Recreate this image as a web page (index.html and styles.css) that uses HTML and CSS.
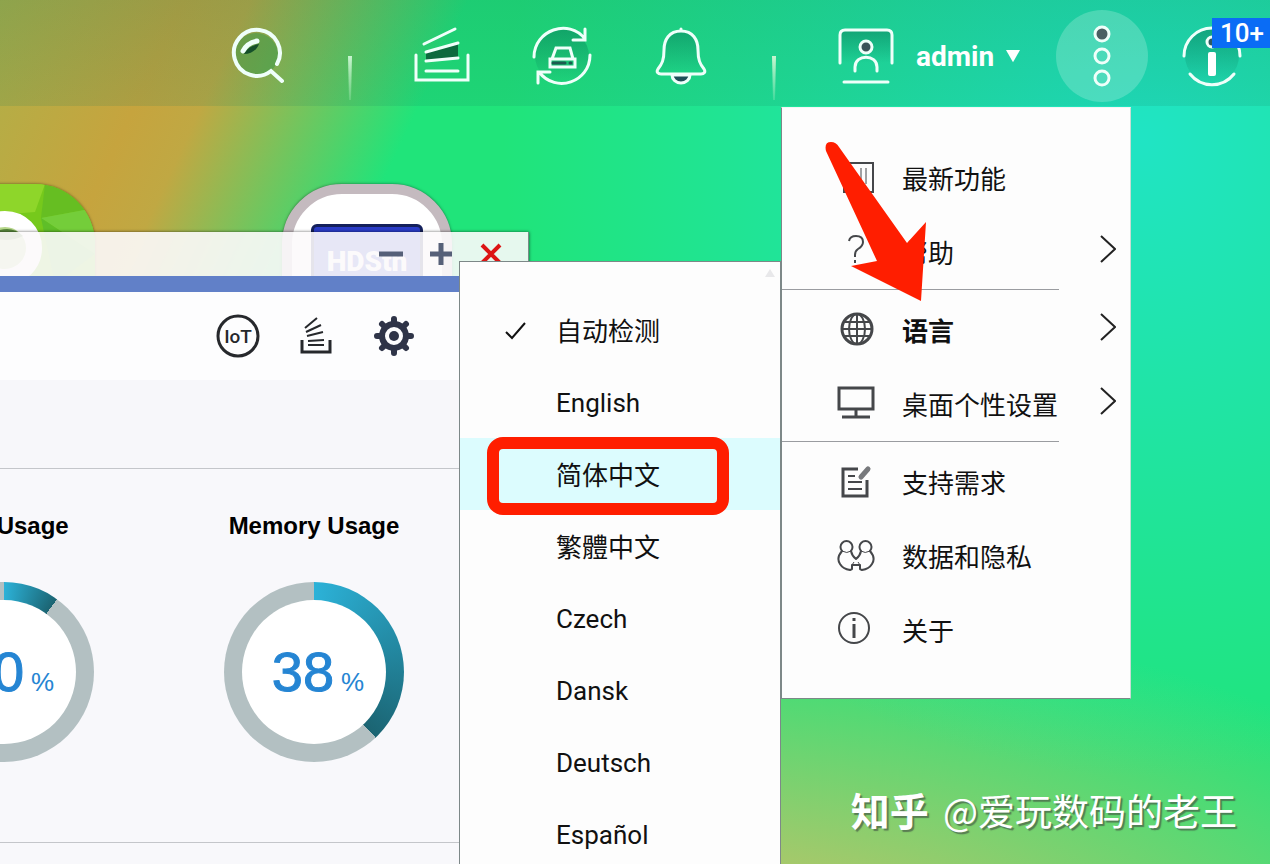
FILE: index.html
```html
<!DOCTYPE html>
<html lang="zh-CN">
<head>
    <meta charset="UTF-8">
    <meta name="viewport" content="width=device-width, initial-scale=1.0">
    <title>QTS</title>
    <link rel="stylesheet" href="styles.css">
</head>
<body>
    <div class="desktop">
        <header class="topbar">
            <button class="tool" aria-label="搜索">
                <svg class="tool-icon" viewBox="0 0 60 60">
                    <defs>
                        <linearGradient id="shade" x1="0" y1="0" x2="0" y2="1">
                            <stop offset="0" stop-color="#067a58" stop-opacity=".5"/>
                            <stop offset="1" stop-color="#067a58" stop-opacity="0"/>
                        </linearGradient>
                    </defs>
                    <circle cx="28" cy="29" r="22" fill="#2f9a4a" stroke="none" opacity=".45"/>
                    <path d="M16 28c7 0 13-4 15-10-7 1-13 5-15 10z" fill="#15502a" stroke="none"/>
                    <path d="M49 38A23 23 0 1 0 43 45L54 55" stroke-width="4"/>
                    <path d="M15 25Q19 17 29 15" stroke-width="5"/>
                </svg>
            </button>
            <span class="divider"></span>
            <button class="tool" aria-label="后台任务">
                <svg class="tool-icon" viewBox="0 0 60 60">
                    <path d="M14 26L46 16V32L14 35z" fill="#0c6a3e" stroke="none"/>
                    <path d="M4 29V54H56V29M14 45H46M14 35L46 32M14 26L46 17M12 18L43 3"/>
                </svg>
            </button>
            <button class="tool" aria-label="外接设备">
                <svg class="tool-icon" viewBox="0 0 60 60">
                    <circle cx="30" cy="30" r="27" fill="url(#shade)" stroke="none"/>
                    <path d="M2 31C2 4 37-8 53 13M53 3V14H41M58 29C58 56 24 68 7 46M6 57V46H18"/>
                    <path d="M20 33L24 22H38L41 33M18 33H43V41H18z"/>
                    <path d="M21 37H33M38 37H39" stroke="#1c5c50"/>
                </svg>
            </button>
            <button class="tool" aria-label="通知">
                <svg class="tool-icon" viewBox="0 0 60 60">
                    <path d="M20 49a9 8 0 0 0 18 0z" fill="#1f4f58"/>
                    <path d="M29 5C17 5 12 14 12 24C12 34 10 38 6 43C4 46 6 48 9 48H49C52 48 54 46 52 43C48 38 46 34 46 24C46 14 41 5 29 5zM29 3V5" fill="url(#shade)"/>
                </svg>
            </button>
            <span class="divider"></span>
            <button class="user">
                <svg class="user-icon" viewBox="0 0 56 60">
                    <path d="M2 37V9Q2 4 7 4H49Q54 4 54 9V37" fill="url(#shade)"/>
                    <path d="M6 56H50M17 45V41C17 28 39 28 39 41V45"/>
                    <circle cx="28" cy="21" r="6" fill="#3a5358"/>
                </svg>
                <span>admin</span>
                <svg class="caret" viewBox="0 0 16 14"><path d="M0 0H16L8 14z"/></svg>
            </button>
            <button class="tool" aria-label="更多">
                <svg class="more-icon" viewBox="0 0 92 92">
                    <circle cx="46" cy="46" r="46" fill="#fff" fill-opacity=".2" stroke="none"/>
                    <circle cx="46" cy="24" r="7" fill="#4a5f62"/>
                    <circle cx="46" cy="46" r="7"/>
                    <circle cx="46" cy="68" r="7"/>
                </svg>
            </button>
            <button class="tool info" aria-label="信息">
                <svg class="tool-icon" viewBox="0 0 60 60">
                    <circle cx="30" cy="30" r="27" fill="url(#shade)" stroke="none"/>
                    <path d="M2 30A28 28 0 0 1 58 30M8 48A28 28 0 0 0 52 48"/>
                    <circle cx="30" cy="16" r="5" fill="#2c5a60"/>
                    <rect x="26" y="26" width="8" height="24" rx="2" fill="#fff" stroke="none"/>
                </svg>
            </button>
            <span class="badge">10+</span>
        </header>

        <div class="app app-search">
            <svg viewBox="0 0 170 170">
                <path d="M0 0H170V170H0z" fill="#76c91c"/>
                <path d="M0 0H120L110 28L84 30z" fill="#8ed62a"/>
                <path d="M120 0H170V24L116 34z" fill="#66be22"/>
                <path d="M116 34L170 24V70z" fill="#74cd3a"/>
                <path d="M116 34L170 70L130 100z" fill="#5fbe28"/>
                <circle cx="80" cy="64" r="29" fill="#b6d78a" stroke="#fff" stroke-width="16"/>
                <path d="M62 52Q84 38 98 52Q82 60 62 52z" fill="#55853a"/>
            </svg>
        </div>
        <div class="app app-hd">
            <div class="hd-screen">HDStn</div>
        </div>

        <section class="window">
            <div class="titlebar">
                <button class="win-btn" aria-label="最小化"><svg viewBox="0 0 24 24"><path d="M0 12H24"/></svg></button>
                <button class="win-btn" aria-label="最大化"><svg viewBox="0 0 24 24"><path d="M1 12H23M12 1V23"/></svg></button>
                <button class="win-btn close" aria-label="关闭"><svg viewBox="0 0 24 24"><path d="M3 3L21 21M21 3L3 21"/></svg></button>
            </div>
            <div class="toolbar">
                <button class="bar-btn" aria-label="IoT">
                    <svg viewBox="0 0 44 44">
                        <circle cx="22" cy="22" r="20" fill="none" stroke="#26282c" stroke-width="3"/>
                        <text x="22" y="29" text-anchor="middle" class="iot">IoT</text>
                    </svg>
                </button>
                <button class="bar-btn" aria-label="任务">
                    <svg viewBox="0 0 44 44" fill="none" stroke="#26282c">
                        <path d="M8 26V38H36V26" stroke-width="3"/>
                        <path d="M14 31H30M14 27L30 26M13 22L29 18M12 18L27 11M11 14L23 4" stroke-width="2"/>
                    </svg>
                </button>
                <button class="bar-btn" aria-label="设置">
                    <svg viewBox="0 0 44 44" fill="none" stroke="#2f3448">
                        <circle cx="22" cy="22" r="12" stroke-width="6"/>
                        <path d="M22 10V5M22 34V39M10 22H5M34 22H39M13 13L10 10M31 13L34 10M13 31L10 34M31 31L34 34" stroke-width="6" stroke-linecap="round"/>
                        <circle cx="22" cy="22" r="5" fill="#2f3448" stroke="none"/>
                    </svg>
                </button>
            </div>
            <div class="subbar"></div>
            <div class="gauges">
                <div class="gauge">
                    <h2>CPU Usage</h2>
                    <div class="ring" style="--value: 10%">
                        <p class="value">10<small>%</small></p>
                    </div>
                </div>
                <div class="gauge">
                    <h2>Memory Usage</h2>
                    <div class="ring" style="--value: 38%">
                        <p class="value">38<small>%</small></p>
                    </div>
                </div>
            </div>
        </section>

        <p class="watermark"><b>知乎</b> @爱玩数码的老王</p>

        <nav class="menu lang-menu">
            <button class="lang cjk">
                <svg class="check" viewBox="0 0 22 18"><path d="M1 10L7 16L20 1"/></svg>自动检测
            </button>
            <button class="lang">English</button>
            <button class="lang cjk selected">简体中文</button>
            <button class="lang cjk" lang="zh-TW">繁體中文</button>
            <button class="lang">Czech</button>
            <button class="lang">Dansk</button>
            <button class="lang">Deutsch</button>
            <button class="lang">Español</button>
            <span class="scroll-up"></span>
            <span class="highlight"></span>
        </nav>

        <nav class="menu main-menu">
            <button class="item">
                <svg class="item-icon" viewBox="0 0 40 40"><path d="M8 5H37V34H8z"/><path d="M25 10V22M30 10V26" stroke-width="1"/></svg>
                <span>最新功能</span>
            </button>
            <button class="item">
                <svg class="item-icon" viewBox="0 0 40 40"><path d="M13 9Q14 4 20 4Q27 4 27 10Q27 14 22 17Q19 19 19 23V25M19 28V31"/></svg>
                <span>帮助</span>
                <svg class="arrow" viewBox="0 0 16 28"><path d="M1 1L15 14L1 27"/></svg>
            </button>
            <hr>
            <button class="item active">
                <svg class="item-icon" viewBox="0 0 40 40"><circle cx="21" cy="19" r="15" stroke-width="3"/><ellipse cx="21" cy="19" rx="8" ry="15"/><path d="M21 4V34M6 19H36M8 12H34M8 26H34"/></svg>
                <span>语言</span>
                <svg class="arrow" viewBox="0 0 16 28"><path d="M1 1L15 14L1 27"/></svg>
            </button>
            <button class="item">
                <svg class="item-icon" viewBox="0 0 40 40"><path d="M3 4H37V25H3zM20 25V33M6 33H34" stroke-width="3"/></svg>
                <span>桌面个性设置</span>
                <svg class="arrow" viewBox="0 0 16 28"><path d="M1 1L15 14L1 27"/></svg>
            </button>
            <hr>
            <button class="item">
                <svg class="item-icon" viewBox="0 0 40 40"><path d="M22 7H7V34H31V18" stroke-width="3"/><path d="M12 14H19M12 20H26M12 27H26"/><path d="M25 15L32 7" stroke="#77797c" stroke-width="5" stroke-linecap="round"/></svg>
                <span>支持需求</span>
            </button>
            <button class="item">
                <svg class="item-icon" viewBox="0 0 40 40"><path d="M6 15A6 6 0 1 1 15 15Q16 20 20 23Q24 20 25 15A6 6 0 1 1 34 15Q40 22 36 28Q33 33 26 34L24 33V29H16V33L14 34Q7 33 4 28Q0 22 6 15z" stroke-linejoin="round"/><path d="M6 15Q11 18 15 15M25 15Q29 18 34 15M16 29L18 26M24 29L22 26" stroke-width="1"/></svg>
                <span>数据和隐私</span>
            </button>
            <button class="item">
                <svg class="item-icon" viewBox="0 0 40 40"><circle cx="18" cy="18" r="15"/><path d="M18 14V28M18 8V11" stroke-width="3"/></svg>
                <span>关于</span>
            </button>
            <svg class="pointer" viewBox="0 0 102 160"><path d="M1 9Q-1 0 6 0Q11 0 14 5L82 101L101 80L96 159L26 124L52 119z"/></svg>
        </nav>
    </div>
</body>
</html>
```

FILE: styles.css
```css
* {
    box-sizing: border-box;
}
body {
    margin: 0;
    font-family: Roboto, "Noto Sans CJK SC", sans-serif;
    color: #111;
}
button {
    border: none;
    padding: 0;
    background: none;
    font: inherit;
    color: inherit;
    cursor: pointer;
}
svg {
    display: block;
    flex: none;
}
.desktop {
    position: relative;
    min-height: 100vh;
    overflow: hidden;
    background:
        radial-gradient(circle at 90% 16%, #20e4c4 0, rgba(32, 228, 196, 0) 640px),
        radial-gradient(ellipse 960px 420px at 50% 118%, #c6c060 0, #bcc468 30%, rgba(32, 228, 122, 0) 100%),
        linear-gradient(115deg, #b0b048 0, #c6a43e 11%, #c0a843 15%, #20e47a 28%, #20e47a 100%);
}

/* top bar */
.topbar {
    position: relative;
    display: flex;
    justify-content: flex-end;
    align-items: center;
    height: 106px;
    padding: 6px 8px 0 0;
    background: linear-gradient(rgba(20, 120, 90, 0.22), rgba(20, 120, 90, 0.14));
    color: #fff;
}
.topbar svg {
    fill: none;
    stroke: #effffa;
    stroke-width: 3;
    stroke-linecap: round;
}
.tool {
    display: flex;
    justify-content: center;
    flex: none;
    width: 120px;
}
.tool.info {
    width: 100px;
}
.tool-icon {
    width: 60px;
    height: 60px;
    overflow: visible;
}
.more-icon {
    width: 92px;
    height: 92px;
}
.divider {
    flex: none;
    align-self: flex-end;
    width: 4px;
    height: 44px;
    margin: 0 30px 6px;
    background: linear-gradient(#c8f5d0, rgba(200, 245, 208, 0.2));
    clip-path: polygon(0 0, 100% 0, 75% 100%, 25% 100%);
}
.user {
    display: flex;
    align-items: center;
    flex: none;
    width: 236px;
    padding-left: 32px;
    font-size: 28px;
    font-weight: 700;
}
.user span {
    margin: 0 12px 0 22px;
}
.user-icon {
    width: 56px;
    height: 60px;
}
.topbar .caret {
    width: 14px;
    height: 14px;
    fill: #fff;
    stroke: none;
}
.badge {
    position: absolute;
    top: 18px;
    right: 0;
    padding: 0 6px 0 8px;
    background: #0a6cf5;
    font-size: 26px;
    font-weight: 500;
    line-height: 30px;
}

/* desktop shortcuts */
.app {
    position: absolute;
    top: 184px;
    width: 170px;
    height: 170px;
    border-radius: 60px;
    overflow: hidden;
    box-shadow: 0 0 3px rgba(0, 0, 0, 0.5);
}
.app-search {
    left: -75px;
}
.app-hd {
    left: 282px;
    padding: 30px 19px;
    border: 10px solid #c4babf;
    background: #fff;
}
.hd-screen {
    height: 100px;
    border: 3px solid #14205c;
    border-radius: 6px;
    background: #2a3cc8;
    color: #fff;
    font-size: 28px;
    font-weight: 900;
    line-height: 70px;
    text-align: center;
}

/* resource monitor window */
.window {
    position: absolute;
    top: 232px;
    bottom: 0;
    left: -151px;
    width: 680px;
    border-right: 1px solid #7a8c88;
    background: linear-gradient(transparent 44px, #f8f8fb 44px);
    overflow: hidden;
    box-shadow: 0 0 3px rgba(0, 0, 0, 0.6);
}
.titlebar {
    display: flex;
    justify-content: flex-end;
    align-items: center;
    height: 44px;
    padding-right: 12px;
    background: rgba(252, 250, 251, 0.9);
}
.win-btn {
    display: flex;
    justify-content: center;
    width: 50px;
}
.win-btn svg {
    width: 24px;
    height: 24px;
    stroke: #566078;
    stroke-width: 5;
}
.win-btn.close svg {
    stroke: #dc1414;
    stroke-width: 4;
}
.toolbar {
    display: flex;
    justify-content: flex-end;
    align-items: center;
    height: 104px;
    padding-right: 95px;
    border-top: 16px solid #6180c8;
    background: #fdfdfe;
}
.bar-btn {
    display: flex;
    justify-content: center;
    width: 78px;
}
.bar-btn svg {
    width: 44px;
    height: 44px;
}
.iot {
    fill: #26282c;
    font-size: 19px;
    font-weight: 500;
}
.subbar {
    height: 89px;
    border-bottom: 1px solid #c4c6ca;
    background: #f7f7fa;
}
.gauges {
    display: flex;
    height: 374px;
    border-bottom: 1px solid #c4c6ca;
    font-family: "Liberation Sans", Arial, sans-serif;
}
.gauge {
    display: flex;
    flex-direction: column;
    align-items: center;
    width: 310px;
    padding-top: 42px;
}
.gauge h2 {
    margin: 0 0 41px;
    color: #000;
    font-size: 24px;
    line-height: 30px;
}
.ring {
    display: flex;
    width: 180px;
    height: 180px;
    padding: 18px;
    border-radius: 50%;
    background: conic-gradient(#2cb2d8, #1b6472 var(--value), #b3c0c2 0);
}
.value {
    flex: 1;
    margin: 0;
    padding-left: 8px;
    border-radius: 50%;
    background: #fff;
    color: #2585d3;
    font-size: 56px;
    line-height: 144px;
    text-align: center;
    -webkit-text-stroke: 1px #2585d3;
}
.value small {
    margin-left: 7px;
    font-size: 26px;
    -webkit-text-stroke: 0;
}

/* menus */
.menu {
    position: absolute;
    border: 1px solid #7d8888;
    background: #fdfdfd;
    font-size: 26px;
}
.lang-menu {
    top: 261px;
    right: 489px;
    bottom: 0;
    width: 322px;
    padding-top: 32px;
    border-bottom: none;
    overflow: hidden;
}
.lang {
    position: relative;
    display: block;
    width: 100%;
    height: 72px;
    padding: 2px 0 0 96px;
    text-align: left;
}
.lang.cjk {
    padding: 0 0 2px 96px;
}
.lang.selected {
    background: #dcfcfe;
}
.check {
    position: absolute;
    top: 28px;
    left: 45px;
    width: 22px;
    height: 18px;
    fill: none;
    stroke: #111;
    stroke-width: 2;
}
.scroll-up {
    position: absolute;
    top: 7px;
    right: 5px;
    border: 5px solid transparent;
    border-top: none;
    border-bottom: 8px solid #e8e8ea;
}
.highlight {
    position: absolute;
    top: 175px;
    left: 27px;
    width: 242px;
    height: 78px;
    border: 12px solid #ff1e00;
    border-radius: 16px;
    pointer-events: none;
}
.main-menu {
    top: 107px;
    right: 139px;
    width: 350px;
    padding: 33px 0 31px;
    border-top-color: #f2f6f4;
    border-right-color: #c8dcd4;
}
.item {
    display: flex;
    align-items: center;
    gap: 26px;
    width: 100%;
    height: 74px;
    padding: 0 14px 0 54px;
}
.item span {
    padding-bottom: 2px;
}
.item.active {
    font-weight: 700;
}
.item-icon {
    width: 40px;
    height: 40px;
    fill: none;
    stroke: #45474a;
    stroke-width: 2;
}
.arrow {
    width: 16px;
    height: 28px;
    margin: 0 0 6px auto;
    fill: none;
    stroke: #222;
    stroke-width: 2;
}
.main-menu hr {
    height: 1px;
    margin: 0 71px 3px 0;
    border: none;
    background: #9a9ca0;
}
.pointer {
    position: absolute;
    top: 34px;
    left: 43px;
    width: 102px;
    height: 160px;
    fill: #ff1e00;
    pointer-events: none;
}

.watermark {
    position: absolute;
    right: 33px;
    bottom: 26px;
    margin: 0;
    color: #fff;
    font-family: "Noto Sans CJK SC", sans-serif;
    font-size: 37px;
    line-height: 56px;
    text-shadow: 2px 2px 1px rgba(70, 90, 70, 0.7);
}
.watermark b {
    margin-right: 6px;
    font-size: 39px;
}
```
